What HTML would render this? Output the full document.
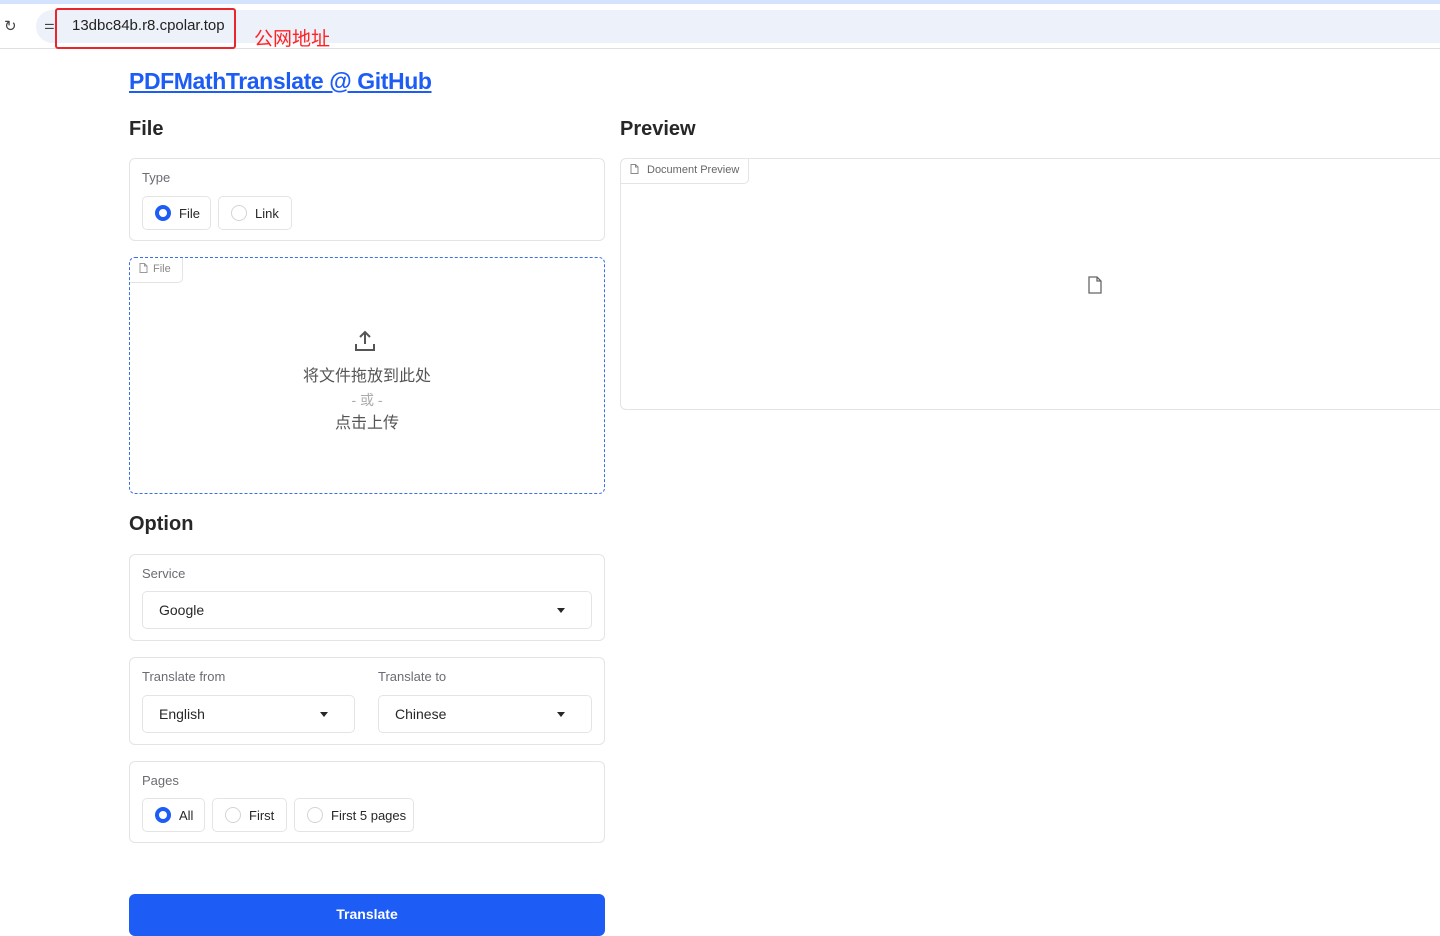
<!DOCTYPE html>
<html><head><meta charset="utf-8"><style>
*{box-sizing:border-box;margin:0;padding:0}
body{width:1440px;height:931px;overflow:hidden;background:#fff;font-family:"Liberation Sans","Noto Sans CJK SC",sans-serif;color:#27272a;position:relative}
.abs{position:absolute}
.blk{position:absolute;border:1px solid #e4e4e7;border-radius:6px;background:#fff}
.lbl{position:absolute;font-size:13px;color:#6b6b73}
.opt{position:absolute;height:34px;border:1px solid #e4e4e7;border-radius:5px;font-size:13px;display:flex;align-items:center;padding-left:12px;gap:8px;color:#27272a}
.r{width:16px;height:16px;border-radius:50%;border:1px solid #d4d4d8;display:inline-block}
.r.on{border:4.5px solid #1d5cf5;background:#fff}
.sel{position:absolute;height:38px;border:1px solid #e4e4e7;border-radius:5px;font-size:14px;padding-left:16px;line-height:36px;color:#27272a}
.sel:after{content:"";position:absolute;right:26px;top:16px;border-left:4.5px solid transparent;border-right:4.5px solid transparent;border-top:5px solid #27272a}
h2{position:absolute;font-size:20px;font-weight:bold;color:#27272a}
</style></head><body>
<div class="abs" style="left:0;top:0;width:1440px;height:4px;background:#d3e3fd"></div>
<div class="abs" style="left:0;top:4px;width:1440px;height:45px;background:#fff;border-bottom:1px solid #e0e0e0"></div>
<div class="abs" style="left:36px;top:10px;width:1404px;height:33px;background:#edf1fa;border-radius:17px 0 0 17px"></div>
<div class="abs" style="left:4px;top:17px;font-size:15px;color:#444">&#x21bb;</div>
<div class="abs" style="left:44px;top:18px;font-size:12px;color:#444">⚌</div>
<div class="abs" style="left:55px;top:8px;width:181px;height:41px;border:2px solid #e8262b;border-radius:3px"></div>
<div class="abs" style="left:72px;top:17px;font-size:15px;color:#222">13dbc84b.r8.cpolar.top</div>
<div class="abs" style="left:254px;top:24px;font-size:19px;color:#f22;font-family:'Noto Sans CJK SC',sans-serif">公网地址</div>

<div class="abs" style="left:129px;top:68px;font-size:23px;letter-spacing:-0.4px;font-weight:bold;color:#1d5cf5;text-decoration:underline">PDFMathTranslate @ GitHub</div>
<h2 style="left:129px;top:118px">File</h2>
<h2 style="left:620px;top:118px">Preview</h2>

<div class="blk" style="left:129px;top:158px;width:476px;height:83px"></div>
<div class="lbl" style="left:142px;top:170px">Type</div>
<div class="opt" style="left:142px;top:196px;width:69px"><span class="r on"></span>File</div>
<div class="opt" style="left:218px;top:196px;width:74px"><span class="r"></span>Link</div>

<div class="abs" style="left:129px;top:257px;width:476px;height:237px;border:1px dashed #3b6fe8;border-radius:6px"></div>
<div class="abs" style="left:130px;top:258px;width:53px;height:25px;border:1px solid #e4e4e7;border-top:none;border-left:none;border-radius:0 0 5px 0;font-size:11px;color:#888;padding:5px 0 0 9px"><svg width="9" height="10" viewBox="0 0 9 10" fill="none" stroke="#999" style="vertical-align:-1px;margin-right:5px"><path d="M1 .5h4.5l2.5 2.5v6.5H1zM5.5 .5V3H8"/></svg>File</div>
<svg class="abs" style="left:353px;top:329px" width="24" height="24" viewBox="0 0 24 24" fill="none" stroke="#555" stroke-width="2"><path d="M12 15V3M7 8l5-5 5 5M3 15v6h18v-6"/></svg>
<div class="abs" style="left:129px;top:365px;width:476px;text-align:center;font-size:16px;color:#555;line-height:23.5px">将文件拖放到此处<br><span style="color:#aaa;font-size:14px">- 或 -</span><br>点击上传</div>

<div class="blk" style="left:620px;top:158px;width:830px;height:252px"></div>
<div class="abs" style="left:621px;top:159px;width:128px;height:25px;border:1px solid #e4e4e7;border-top:none;border-left:none;border-radius:0 0 5px 0;font-size:11px;color:#666;padding:5px 0 0 9px"><svg width="9" height="10" viewBox="0 0 9 10" fill="none" stroke="#888" style="vertical-align:-1px;margin-right:8px"><path d="M1 .5h4.5l2.5 2.5v6.5H1zM5.5 .5V3H8"/></svg>Document Preview</div>
<svg class="abs" style="left:1087px;top:276px" width="16" height="18" viewBox="0 0 16 18" fill="none" stroke="#666" stroke-width="1.3"><path d="M2 1h8l4 4v12H2zM10 1v4h4"/></svg>

<h2 style="left:129px;top:513px">Option</h2>
<div class="blk" style="left:129px;top:554px;width:476px;height:87px"></div>
<div class="lbl" style="left:142px;top:566px">Service</div>
<div class="sel" style="left:142px;top:591px;width:450px">Google</div>

<div class="blk" style="left:129px;top:657px;width:476px;height:88px"></div>
<div class="lbl" style="left:142px;top:669px">Translate from</div>
<div class="lbl" style="left:378px;top:669px">Translate to</div>
<div class="sel" style="left:142px;top:695px;width:213px">English</div>
<div class="sel" style="left:378px;top:695px;width:214px">Chinese</div>

<div class="blk" style="left:129px;top:761px;width:476px;height:82px"></div>
<div class="lbl" style="left:142px;top:773px">Pages</div>
<div class="opt" style="left:142px;top:798px;width:63px"><span class="r on"></span>All</div>
<div class="opt" style="left:212px;top:798px;width:75px"><span class="r"></span>First</div>
<div class="opt" style="left:294px;top:798px;width:120px"><span class="r"></span>First 5 pages</div>

<div class="abs" style="left:129px;top:894px;width:476px;height:42px;background:#1d5cf5;border-radius:6px;color:#fff;font-weight:bold;font-size:14px;text-align:center;line-height:40px">Translate</div>
</body></html>
